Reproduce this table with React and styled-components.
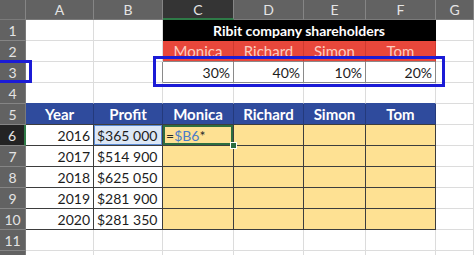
import React from 'react'
import styled, { createGlobalStyle } from 'styled-components'

const GlobalStyle = createGlobalStyle`
	html, body {
		margin: 0;
		padding: 0;
		background: #ffffff;
	}
	body {
		font-family: Lato, 'Liberation Sans', sans-serif;
	}
`

const COLS = ['A', 'B', 'C', 'D', 'E', 'F', 'G']
const NAMES = ['Monica', 'Richard', 'Simon', 'Tom']
const SHARES = ['30%', '40%', '10%', '20%']
const PROFITS = [
	['2016', '$365 000'],
	['2017', '$514 900'],
	['2018', '$625 050'],
	['2019', '$281 900'],
	['2020', '$281 350'],
]

const DARK = '#3d3d3d'
const FRAME = '#8a8a8a'
const BLUE = '#2f4b9d'

const App = () => {
	return (
		<>
			<GlobalStyle />
			<Sheet>
				<Corner />
				{COLS.map((c) => (
					<ColHead key={c} $active={c === 'C'}>
						{c}
					</ColHead>
				))}
				<ColHead />

				{/* row 1 */}
				<RowHead>1</RowHead>
				<Cell />
				<Cell />
				<TitleCell $span={4}>Ribit company shareholders</TitleCell>
				<Cell />
				<Cell />

				{/* row 2 */}
				<RowHead>2</RowHead>
				<Cell />
				<Cell />
				{NAMES.map((n) => (
					<NameCell key={n}>{n}</NameCell>
				))}
				<Cell />
				<Cell />

				{/* row 3 */}
				<RowHead>3</RowHead>
				<Cell />
				<Cell $r={FRAME} />
				{SHARES.map((s) => (
					<Cell key={s} $align="right" $r={FRAME} $b={FRAME}>
						{s}
					</Cell>
				))}
				<Cell />
				<Cell />

				{/* row 4 */}
				<RowHead>4</RowHead>
				{[0, 1, 2, 3, 4, 5].map((i) => (
					<Cell key={i} $b={BLUE} />
				))}
				<Cell />
				<Cell />

				{/* row 5 */}
				<RowHead>5</RowHead>
				{['Year', 'Profit', ...NAMES].map((h) => (
					<HeadCell key={h}>{h}</HeadCell>
				))}
				<Cell />
				<Cell />

				{/* rows 6-10 */}
				{PROFITS.map(([year, profit], i) => (
					<React.Fragment key={year}>
						<RowHead $active={i === 0}>{i + 6}</RowHead>
						<Cell $align="right" $r={DARK} $b={DARK}>
							{year}
						</Cell>
						{i === 0 ? (
							<RefCell $r={DARK} $b={DARK}>
								{profit}
							</RefCell>
						) : (
							<Cell $r={DARK} $b={DARK}>
								{profit}
							</Cell>
						)}
						{i === 0 ? (
							<ActiveCell>
								<Op>=</Op>
								<RefText>$B6</RefText>
								<Op>*</Op>
							</ActiveCell>
						) : (
							<FillCell />
						)}
						<FillCell />
						<FillCell />
						<FillCell />
						<Cell />
						<Cell />
					</React.Fragment>
				))}

				{/* row 11 and the edge of row 12 */}
				<RowHead>11</RowHead>
				{[0, 1, 2, 3, 4, 5, 6, 7].map((i) => (
					<Cell key={i} />
				))}
				<RowHead />
				{[0, 1, 2, 3, 4, 5, 6, 7].map((i) => (
					<Cell key={i} />
				))}

				<RowMark />
				<RangeMark />
			</Sheet>
		</>
	)
}

const Sheet = styled.div`
	position: relative;
	display: grid;
	grid-template-columns: 26px 68px 69px 71px 70px 62px 70px 38px 1fr;
	grid-template-rows: 20px repeat(12, 21px);
	width: 474px;
	height: 255px;
	overflow: hidden;
	font-family: Lato, 'Liberation Sans', sans-serif;
`

const ColHead = styled.div`
	box-sizing: border-box;
	display: flex;
	align-items: center;
	justify-content: center;
	background: ${(p) => (p.$active ? '#343434' : '#626262')};
	color: #e4e4e4;
	font-size: 14px;
	border-right: 1px solid #858585;
	border-bottom: ${(p) => (p.$active ? '2px solid #2e7a47' : '1px solid #7a7a7a')};
`

const Corner = styled(ColHead)`
	position: relative;

	::after {
		content: '';
		position: absolute;
		right: 3px;
		bottom: 3px;
		width: 15px;
		height: 15px;
		background: #d0d0d0;
		clip-path: polygon(100% 0, 100% 100%, 0 100%);
	}
`

const RowHead = styled.div`
	box-sizing: border-box;
	display: flex;
	align-items: center;
	justify-content: center;
	background: ${(p) => (p.$active ? '#232323' : '#626262')};
	color: #e4e4e4;
	font-size: 14px;
	border-bottom: 1px solid #858585;
	border-right: ${(p) => (p.$active ? '2px solid #2e7a47' : '1px solid #7a7a7a')};
`

const Cell = styled.div`
	position: relative;
	box-sizing: border-box;
	display: flex;
	align-items: center;
	justify-content: ${(p) =>
		p.$align === 'right' ? 'flex-end' : p.$align === 'center' ? 'center' : 'flex-start'};
	grid-column: span ${(p) => p.$span || 1};
	padding: 0 3px;
	background: #ffffff;
	color: #1c1c1c;
	font-size: 14px;
	white-space: nowrap;
	border-right: 1px solid ${(p) => p.$r || '#dcdcdc'};
	border-bottom: 1px solid ${(p) => p.$b || '#dcdcdc'};
`

const TitleCell = styled(Cell)`
	justify-content: center;
	background: #000000;
	color: #ffffff;
	font-weight: 700;
	border-color: #000000;
`

const NameCell = styled(Cell)`
	justify-content: center;
	overflow: hidden;
	background: #e8473b;
	color: #fbcdc1;
	font-size: 15px;
	border-right-color: #cf3a30;
	border-bottom-color: ${FRAME};

	::after {
		content: '';
		position: absolute;
		left: 0;
		right: 0;
		bottom: 0;
		height: 7px;
		background: #ffffff;
	}
`

const HeadCell = styled(Cell)`
	justify-content: center;
	background: ${BLUE};
	color: #ffffff;
	font-weight: 700;
	font-size: 15px;
	border-right-color: #243a7c;
	border-bottom-color: ${DARK};
`

const FillCell = styled(Cell)`
	background: #fee193;
	border-right-color: ${DARK};
	border-bottom-color: ${DARK};
`

const RefCell = styled(Cell)`
	background: #dce7f6;
	box-shadow: inset 0 0 0 1px #5b8bd5;

	::before,
	::after {
		content: '';
		position: absolute;
		top: -2px;
		width: 4px;
		height: 4px;
		background: #5b8bd5;
		border: 1px solid #ffffff;
		box-sizing: border-box;
	}
	::before {
		left: -2px;
	}
	::after {
		right: -3px;
	}
`

const ActiveCell = styled(FillCell)`
	z-index: 1;
	box-shadow: inset 0 0 0 2px #2d6d40;

	::after {
		content: '';
		position: absolute;
		right: -4px;
		bottom: -4px;
		width: 5px;
		height: 5px;
		background: #2d6d40;
		border: 1px solid #ffffff;
	}
`

const Op = styled.span`
	color: #2a2a2a;
`

const RefText = styled.span`
	color: #4a7cc9;
`

const RowMark = styled.div`
	position: absolute;
	left: -3px;
	top: 60px;
	width: 35px;
	height: 23px;
	box-sizing: border-box;
	border: 3px solid #1b1bd6;
	pointer-events: none;
`

const RangeMark = styled.div`
	position: absolute;
	left: 153px;
	top: 56px;
	width: 292px;
	height: 31px;
	box-sizing: border-box;
	border: 3px solid #1b1bd6;
	pointer-events: none;
`

export default App
